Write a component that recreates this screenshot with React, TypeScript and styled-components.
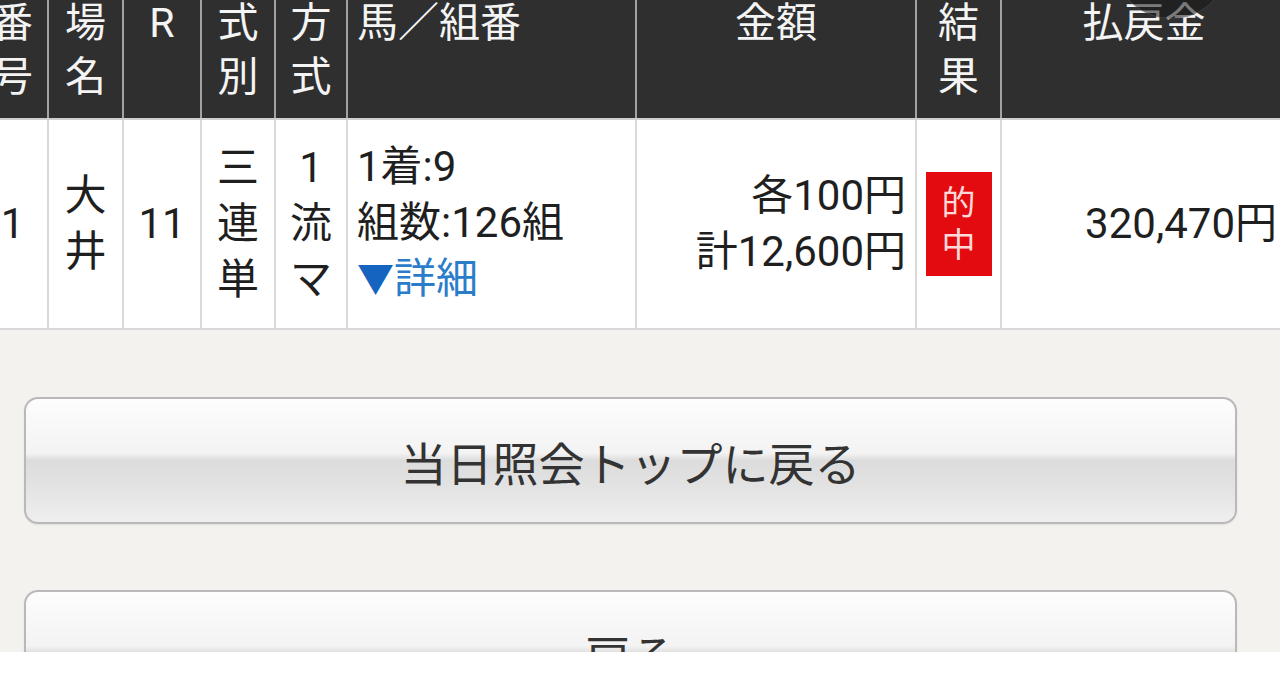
import styled, { createGlobalStyle } from "styled-components";

const GlobalStyle = createGlobalStyle`
  html, body {
    margin: 0;
    padding: 0;
    background: #ffffff;
  }
  body {
    font-family: Roboto, "Noto Sans CJK JP", sans-serif;
  }
`;

const Page = styled.div`
  position: relative;
  width: 1280px;
  height: 652px;
  overflow: hidden;
  background: #f3f2ef;
`;

const Table = styled.table`
  table-layout: fixed;
  border-collapse: collapse;
  width: 1310px;
  margin: -14px 0 0 -24px;
`;

const HeadCell = styled.th<{ align?: "left" | "center" | "right" }>`
  background: #2f2f2f;
  color: #f4f4f4;
  font-size: 41px;
  font-weight: 400;
  line-height: 54px;
  vertical-align: top;
  text-align: ${({ align }) => align || "center"};
  padding: 10px 0 14px;
  padding-left: ${({ align }) => (align === "left" ? "9px" : "0")};
  border-left: 2px solid #a2a2a2;
  border-right: 2px solid #a2a2a2;
  border-bottom: 2px solid #cfcfcf;
`;

const BodyCell = styled.td<{ align?: "left" | "center" | "right" }>`
  background: #ffffff;
  color: #1f1f1f;
  font-size: 42px;
  height: 168px;
  line-height: 56px;
  padding: 19px 0;
  padding-left: ${({ align }) => (align === "left" ? "9px" : "0")};
  padding-right: ${({ align }) => (align === "right" ? "9px" : "0")};
  text-align: ${({ align }) => align || "center"};
  vertical-align: middle;
  border: 2px solid #d9d9d9;
`;

const Link = styled.span`
  color: #2b7cc9;
`;

const Arrow = styled.span`
  color: #1565c0;
  font-size: 37px;
`;

const Badge = styled.div`
  display: inline-block;
  background: #e30b0f;
  color: #ffd9d9;
  font-size: 34px;
  line-height: 42px;
  padding: 10px 16px;
  vertical-align: middle;
`;

const Actions = styled.div`
  display: flex;
  flex-direction: column;
  gap: 66px;
  padding: 67px 43px 0 24px;
`;

const Button = styled.button`
  height: 127px;
  width: 100%;
  flex-shrink: 0;
  border: 2px solid #b9b9b9;
  border-radius: 14px;
  background: linear-gradient(
    to bottom,
    #fdfdfd 0%,
    #f3f3f3 44%,
    #dcdcdc 50%,
    #e3e3e3 72%,
    #efefef 100%
  );
  box-shadow: 0 1px 2px rgba(0, 0, 0, 0.08);
  color: #333333;
  font-family: Roboto, "Noto Sans CJK JP", sans-serif;
  font-size: 46px;
  padding: 0;
`;

const Overlay = styled.div`
  position: absolute;
  left: 1113px;
  top: -98px;
  width: 115px;
  height: 115px;
  border-radius: 50%;
  background: rgba(22, 22, 22, 0.55);
  border: 1px solid rgba(255, 255, 255, 0.12);
`;

const columns = [71, 75, 78, 74, 72, 289, 280, 85, 286];

const stack = (text: string) =>
  text.split("").map((ch, i) => (
    <span key={i}>
      {i > 0 && <br />}
      {ch}
    </span>
  ));

export default function App() {
  return (
    <>
      <GlobalStyle />
      <Page>
        <Table>
          <colgroup>
            {columns.map((w, i) => (
              <col key={i} style={{ width: w }} />
            ))}
          </colgroup>
          <thead>
            <tr>
              <HeadCell>{stack("番号")}</HeadCell>
              <HeadCell>{stack("場名")}</HeadCell>
              <HeadCell>R</HeadCell>
              <HeadCell>{stack("式別")}</HeadCell>
              <HeadCell>{stack("方式")}</HeadCell>
              <HeadCell align="left">馬／組番</HeadCell>
              <HeadCell>金額</HeadCell>
              <HeadCell>{stack("結果")}</HeadCell>
              <HeadCell>払戻金</HeadCell>
            </tr>
          </thead>
          <tbody>
            <tr>
              <BodyCell>1</BodyCell>
              <BodyCell>{stack("大井")}</BodyCell>
              <BodyCell>11</BodyCell>
              <BodyCell>{stack("三連単")}</BodyCell>
              <BodyCell>{stack("1流マ")}</BodyCell>
              <BodyCell align="left">
                1着:9
                <br />
                組数:126組
                <br />
                <Arrow>▼</Arrow>
                <Link>詳細</Link>
              </BodyCell>
              <BodyCell align="right">
                各100円
                <br />
                計12,600円
              </BodyCell>
              <BodyCell>
                <Badge>{stack("的中")}</Badge>
              </BodyCell>
              <BodyCell align="right">320,470円</BodyCell>
            </tr>
          </tbody>
        </Table>
        <Actions>
          <Button>当日照会トップに戻る</Button>
          <Button>戻る</Button>
        </Actions>
        <Overlay />
      </Page>
    </>
  );
}
